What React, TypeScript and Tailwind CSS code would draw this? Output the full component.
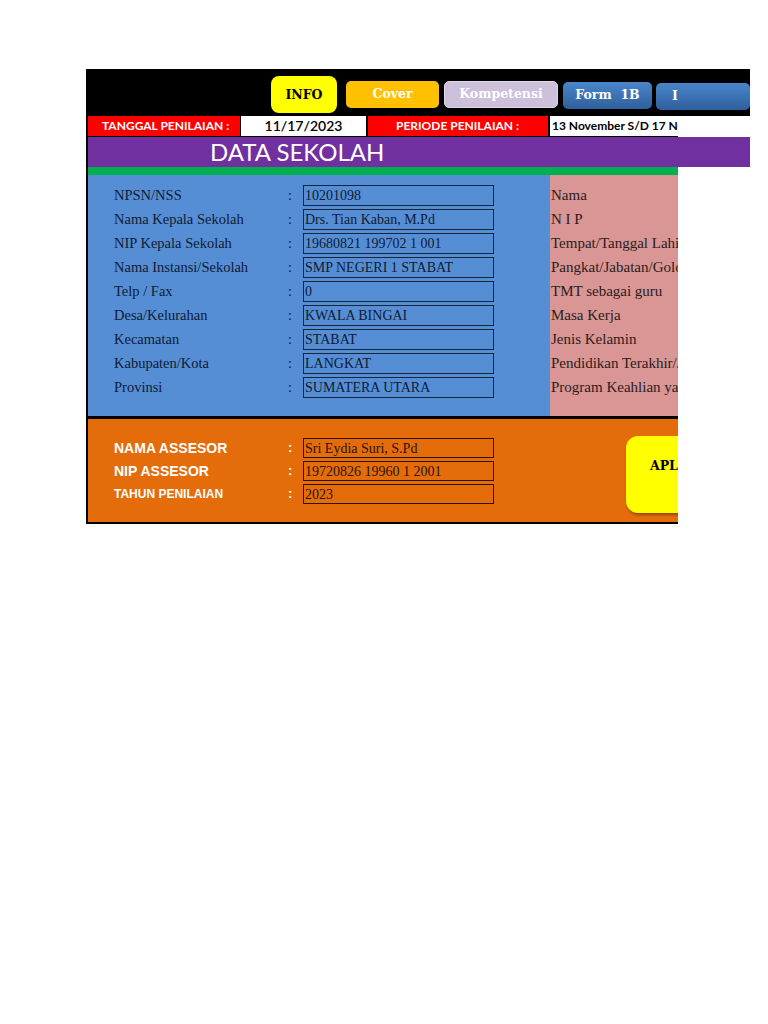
import React from "react";

const serif = "font-['Liberation_Serif',serif]";

const sekolah: [string, string][] = [
  ["NPSN/NSS", "10201098"],
  ["Nama Kepala Sekolah", "Drs. Tian Kaban, M.Pd"],
  ["NIP Kepala Sekolah", "19680821 199702 1 001"],
  ["Nama Instansi/Sekolah", "SMP NEGERI 1 STABAT"],
  ["Telp / Fax", "0"],
  ["Desa/Kelurahan", "KWALA BINGAI"],
  ["Kecamatan", "STABAT"],
  ["Kabupaten/Kota", "LANGKAT"],
  ["Provinsi", "SUMATERA UTARA"],
];

const guru = [
  "Nama",
  "N I P",
  "Tempat/Tanggal Lahir",
  "Pangkat/Jabatan/Golongan",
  "TMT sebagai guru",
  "Masa Kerja",
  "Jenis Kelamin",
  "Pendidikan Terakhir/Jurusan",
  "Program Keahlian yang diampu",
];

const assesor: [string, string, string][] = [
  ["NAMA ASSESOR", "Sri Eydia Suri, S.Pd", "text-[14px]"],
  ["NIP ASSESOR", "19720826 19960 1 2001", "text-[14px]"],
  ["TAHUN PENILAIAN", "2023", "text-[12px]"],
];

export default function App() {
  return (
    <div className="min-h-[1024px] bg-white pt-[69px] pl-[86px]">
      <div className="w-[664px]">
        {/* top nav bar */}
        <div className="h-[47px] bg-black flex items-start pl-[185px] font-['DejaVu_Serif',serif] font-bold">
          <div className="mt-[7px] w-[66px] h-[37px] rounded-[8px] bg-[#ffff00] flex items-center justify-center pt-[2px] text-[12.5px] text-black shadow-[0_1px_2px_rgba(0,0,0,0.5)]">
            INFO
          </div>
          <div className="ml-[9px] mt-[12px] w-[93px] h-[27px] rounded-[5px] bg-[#ffc000] flex items-center justify-center text-[12.5px] text-white">
            Cover
          </div>
          <div className="ml-[5px] mt-[12px] w-[114px] h-[27px] rounded-[5px] bg-[#ccc0da] border border-[#e0d8ea] flex items-center justify-center text-[12.5px] text-white">
            Kompetensi
          </div>
          <div className="ml-[5px] mt-[13px] w-[89px] h-[27px] rounded-[5px] bg-linear-to-b from-[#4a86cb] to-[#2f5f9c] flex items-center justify-center text-[12.5px] text-white whitespace-pre">
            {"Form  1B"}
          </div>
          <div className="ml-[4px] mt-[14px] w-[94px] h-[27px] rounded-[5px] bg-linear-to-b from-[#4a86cb] to-[#2f5f9c] flex items-center pl-[16px] text-[12.5px] text-white">
            I
          </div>
        </div>

        {/* tanggal / periode row */}
        <div className="w-[592px] h-[21px] bg-black flex pl-[2px] pb-[1px] font-['Lato',sans-serif]">
          <div className="w-[152px] bg-[#ff0000] text-white font-bold text-[12px] flex items-center pl-[14px]">
            TANGGAL PENILAIAN :
          </div>
          <div className="ml-[1px] w-[125px] bg-white text-black text-[14px] font-semibold flex items-center justify-center leading-none">
            11/17/2023
          </div>
          <div className="ml-[2px] w-[180px] bg-[#ff0000] text-white font-bold text-[12px] flex items-center pl-[28px]">
            PERIODE PENILAIAN :
          </div>
          <div className="ml-[2px] w-[128px] bg-white text-black font-bold text-[12px] flex items-center pl-[2px] overflow-hidden whitespace-nowrap">
            13 November S/D 17 November 2023
          </div>
        </div>

        {/* purple title */}
        <div className="h-[30px] w-[664px] border-l-2 border-black bg-[#7030a0] flex items-center pl-[122px] text-white text-[24px] font-['Lato',sans-serif] leading-none">
          DATA SEKOLAH
        </div>

        {/* green strip */}
        <div className="h-[8px] w-[592px] border-l-2 border-black bg-[#00b050]" />

        {/* main data */}
        <div className="w-[592px] h-[241px] border-l-2 border-black flex">
          <div className={`w-[462px] bg-[#558ed5] pt-[10px] pl-[26px] flex flex-col gap-[3px] ${serif} text-[#0f1b33]`}>
            {sekolah.map(([label, value]) => (
              <div key={label} className="flex h-[21px] items-center">
                <div className="w-[174px] whitespace-nowrap text-[14.5px]">{label}</div>
                <div className="w-[15px] text-[14px]">:</div>
                <div className="w-[191px] h-[21px] border border-[#17243a] pl-[1px] flex items-center whitespace-nowrap text-[14px]">
                  {value}
                </div>
              </div>
            ))}
          </div>
          <div className={`flex-1 bg-[#da9694] pt-[10px] pl-[1px] flex flex-col gap-[3px] overflow-hidden ${serif} text-[15px] text-[#2a1c1c]`}>
            {guru.map((g) => (
              <div key={g} className="h-[21px] flex items-center whitespace-nowrap">
                {g}
              </div>
            ))}
          </div>
        </div>

        {/* separator */}
        <div className="h-[3px] w-[592px] bg-black" />

        {/* orange assesor */}
        <div className="w-[592px] h-[105px] border-l-2 border-b-2 border-black bg-[#e46c0a] flex overflow-hidden">
          <div className="pt-[19px] pl-[26px] flex flex-col gap-[3px] w-[406px] shrink-0">
            {assesor.map(([label, value, size]) => (
              <div key={label} className="flex h-[20px] items-center">
                <div className={`w-[174px] whitespace-nowrap text-white font-bold font-['Liberation_Sans',sans-serif] ${size}`}>
                  {label}
                </div>
                <div className="w-[15px] text-white font-bold text-[13px] font-['Liberation_Sans',sans-serif]">:</div>
                <div className={`w-[191px] h-[20px] border border-[#2a1300] pl-[1px] flex items-center whitespace-nowrap ${serif} text-[14px] text-[#2a1300]`}>
                  {value}
                </div>
              </div>
            ))}
          </div>
          <div className="ml-[132px] mt-[17px] shrink-0 w-[120px] h-[77px] rounded-[12px] bg-[#ffff00] shadow-[1px_2px_3px_rgba(0,0,0,0.35)] pt-[21px] pl-[24px] font-['DejaVu_Serif',serif] font-bold text-[12.5px] text-black">
            APLIKASI
          </div>
        </div>
      </div>
    </div>
  );
}
